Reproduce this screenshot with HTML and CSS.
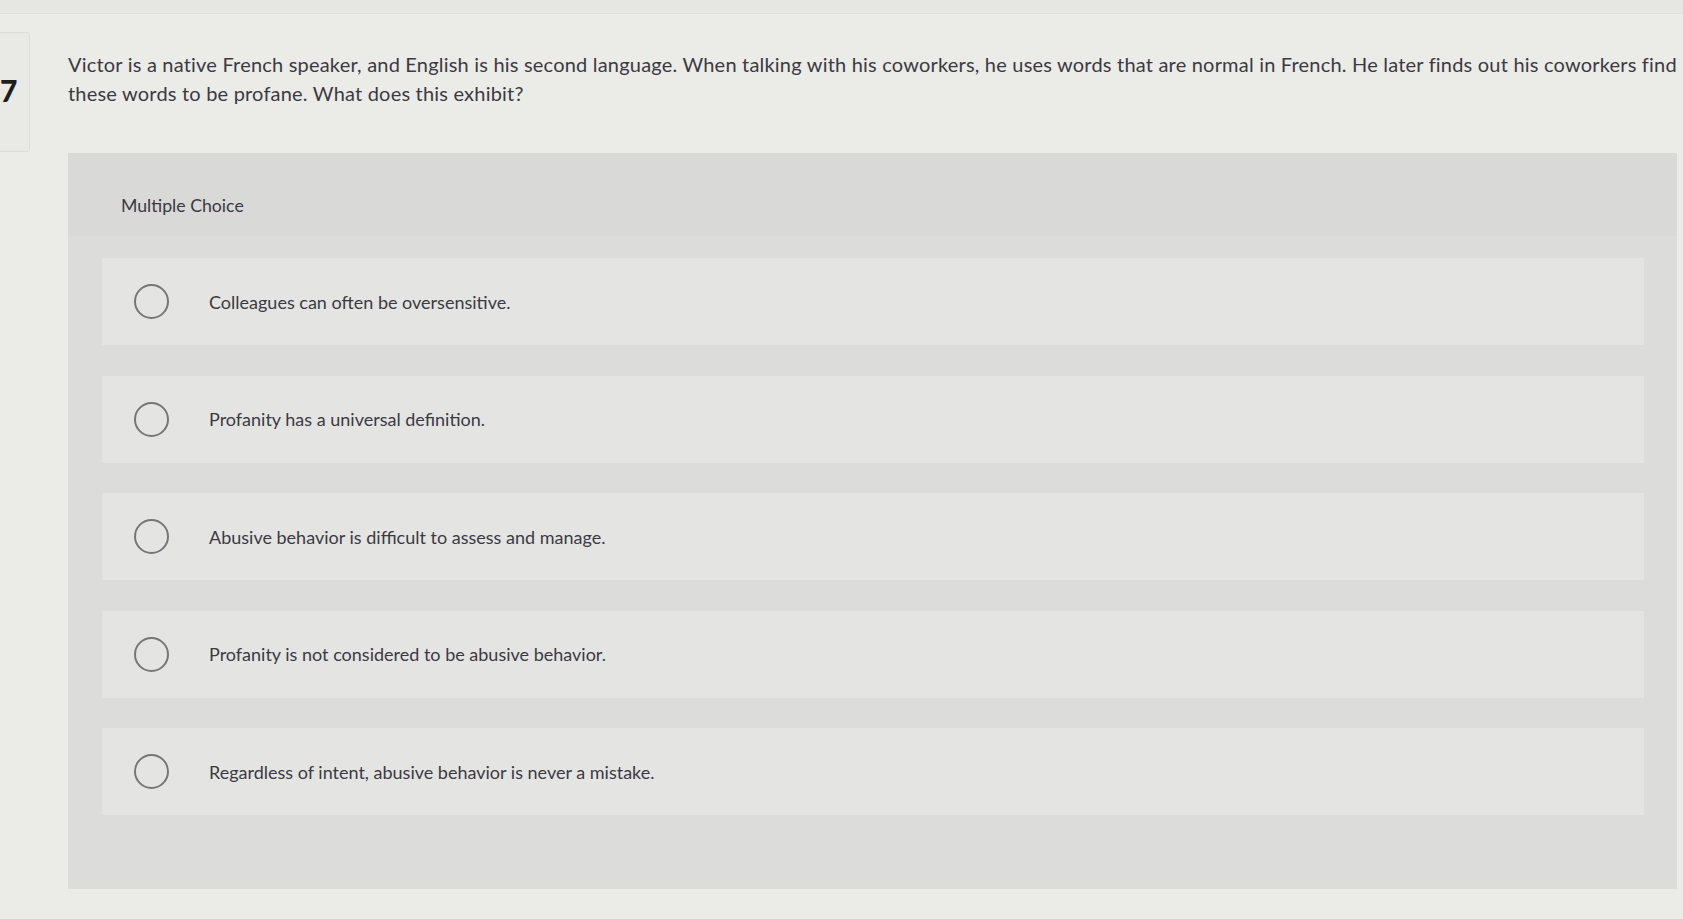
FILE: index.html
```html
<!DOCTYPE html>
<html lang="en">
<head>
    <meta charset="UTF-8">
    <meta name="viewport" content="width=device-width, initial-scale=1.0">
    <title>Question 7</title>
    <link rel="stylesheet" href="styles.css">
</head>
<body>
    <div class="topbar"></div>

    <div class="question-area">
        <div class="qnum-tab"><span class="qnum">7</span></div>
        <p class="question">Victor is a native French speaker, and English is his second language. When talking with his coworkers, he uses words that are normal in French. He later finds out his coworkers find these words to be profane. What does this exhibit?</p>
    </div>

    <div class="choice-panel">
        <div class="choice-header">Multiple Choice</div>

        <div class="choice-list">
            <div class="choice">
                <span class="radio"></span>
                <span class="choice-text">Colleagues can often be oversensitive.</span>
            </div>
            <div class="choice">
                <span class="radio"></span>
                <span class="choice-text">Profanity has a universal definition.</span>
            </div>
            <div class="choice">
                <span class="radio"></span>
                <span class="choice-text">Abusive behavior is difficult to assess and manage.</span>
            </div>
            <div class="choice">
                <span class="radio"></span>
                <span class="choice-text">Profanity is not considered to be abusive behavior.</span>
            </div>
            <div class="choice">
                <span class="radio"></span>
                <span class="choice-text">Regardless of intent, abusive behavior is never a mistake.</span>
            </div>
        </div>
    </div>
</body>
</html>
```

FILE: styles.css
```css
body {
    margin: 0;
    padding: 0;
    background-color: #ebebe8;
    color: #3b3a42;
    font-family: 'Lato', 'Noto Sans', sans-serif;
    overflow: hidden;
}
.topbar {
    height: 13px;
    background-color: #e6e6e3;
    border-bottom: 1px solid #dededb;
}
.question-area {
    display: flex;
    align-items: flex-start;
}
.qnum-tab {
    width: 29px;
    height: 118px;
    margin-top: 18px;
    border: 1px solid #dcdcd8;
    border-left: none;
    border-radius: 0 4px 4px 0;
    background-color: #e9e9e6;
    overflow: hidden;
    display: flex;
    align-items: center;
}
.qnum {
    font-size: 30px;
    font-weight: 900;
    color: #1e1e22;
    margin-left: 0;
    margin-top: -4px;
}
.question {
    width: 1616px;
    margin: 36px 0 0 38px;
    font-size: 20px;
    line-height: 29px;
    letter-spacing: 0.2px;
}
.choice-panel {
    margin: 1px 6px 0 68px;
    background-color: #dcdcda;
    padding-bottom: 74px;
}
.choice-header {
    height: 83px;
    box-sizing: border-box;
    padding: 41px 0 0 53px;
    font-size: 17.7px;
    line-height: 24px;
    background-color: #d9d9d7;
}
.choice-list {
    display: flex;
    flex-direction: column;
    gap: 30.5px;
    padding: 22px 33px 0 34px;
}
.choice {
    height: 87px;
    display: flex;
    align-items: center;
    gap: 40px;
    padding-left: 32px;
    background-color: #e4e4e2;
}
.radio {
    width: 31px;
    height: 31px;
    border: 2px solid #76767a;
    border-radius: 50%;
    flex-shrink: 0;
}
.choice-text {
    font-size: 18px;
}
```
